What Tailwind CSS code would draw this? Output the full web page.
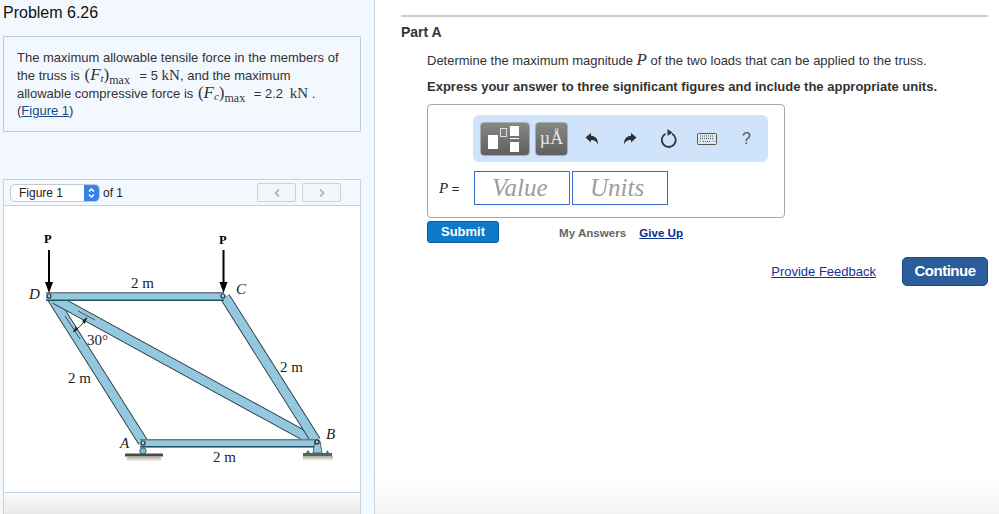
<!DOCTYPE html>
<html><head><meta charset="utf-8"><script src="https://cdn.jsdelivr.net/npm/@tailwindcss/browser@4"></script></head>
<body class="m-0 w-[999px] h-[514px] overflow-hidden bg-white font-['Liberation_Sans',Arial,sans-serif] text-[13px] text-[#222]">
<div class="flex h-[514px]">
  <aside class="w-[375px] h-[514px] shrink-0 bg-[#f3f8fe] border-r-[1px] border-[#c3d3e6] pl-[3px] overflow-hidden">
    <h1 class="text-[16px] leading-[19px] pt-[3px] h-[36px] font-normal text-[#111]">Problem 6.26</h1>
    <section class="w-[358px] h-[96px] border border-[#b9cfe0] pl-[13px] pt-[13px] text-[#333] leading-[17px]">
      <p class="h-[16px] leading-[16px]">The maximum allowable tensile force in the members of</p>
      <p class="h-[18px] leading-[18px] whitespace-nowrap">the truss is <span class="font-['Liberation_Serif',serif] text-[17px] ml-[1px]">(<i>F</i><i class="text-[11px] relative top-[2px]">t</i>)</span><span class="font-['Liberation_Serif',serif] text-[12px] relative top-[4px] mr-[6px]">max</span> = 5 <span class="font-['Liberation_Serif',serif] text-[15px]">kN</span>, and the maximum</p>
      <p class="h-[18px] leading-[18px] whitespace-nowrap">allowable compressive force is <span class="font-['Liberation_Serif',serif] text-[17px] ml-[1px]">(<i>F</i><i class="text-[11px] relative top-[2px]">c</i>)</span><span class="font-['Liberation_Serif',serif] text-[12px] relative top-[4px] mr-[5px]">max</span> = 2.2 <span class="font-['Liberation_Serif',serif] text-[15px] ml-[3px]">kN</span> .</p>
      <p class="h-[18px] leading-[18px]">(<a class="underline text-[#1a4a8a]">Figure 1</a>)</p>
    </section>
    <section class="w-[358px] h-[336px] mt-[47px] border border-[#c3d3e6] border-b-0 flex flex-col">
      <div class="h-[26px] shrink-0 border-b border-[#c3d3e6] flex items-center pl-[6px] text-[12px] text-[#222]">
        <div class="w-[90px] h-[18px] rounded-[5px] bg-white border border-[#c8c8c8] flex items-center justify-between pl-[8px] overflow-hidden">
          <span>Figure 1</span>
          <span class="w-[15px] h-[18px] bg-[#3b82e6] flex items-center justify-center rounded-r-[5px]">
            <svg width="9" height="12" viewBox="0 0 9 12"><path d="M2 4.500 4.500 2 7 4.500M2 7.500 4.500 10 7 7.500" fill="none" stroke="#fff" stroke-width="1.500"/></svg>
          </span>
        </div>
        <span class="ml-[3px]">of 1</span>
        <div class="ml-auto mr-[19px] flex gap-[6px]">
          <span class="w-[39px] h-[19px] border border-[#d0d0d0] rounded-[2px] bg-[#f4f6f8] flex items-center justify-center"><svg width="8" height="10" viewBox="0 0 8 10"><path d="M6 1.500 2.500 5 6 8.500" fill="none" stroke="#b5b5b5" stroke-width="1.800"/></svg></span>
          <span class="w-[39px] h-[19px] border border-[#d0d0d0] rounded-[2px] bg-[#f4f6f8] flex items-center justify-center"><svg width="8" height="10" viewBox="0 0 8 10"><path d="M2 1.500 5.500 5 2 8.500" fill="none" stroke="#b5b5b5" stroke-width="1.800"/></svg></span>
        </div>
      </div>
      <div class="h-[286px] shrink-0 bg-white">
        <svg width="356" height="286" viewBox="4 206 356 286" class="block" font-family="Liberation Serif, serif" fill="#222">
          <defs><linearGradient id="sh" x1="0" y1="0" x2="0" y2="1"><stop offset="0" stop-color="#a8a88e"/><stop offset="1" stop-color="#fff"/></linearGradient></defs>
          <!-- D-A -->
          <line x1="52" y1="298" x2="143" y2="442" stroke="#26343c" stroke-width="10.500"/>
          <line x1="52" y1="298" x2="143" y2="442" stroke="#94c8df" stroke-width="8.800"/>
          <!-- D-B -->
          <line x1="55" y1="299" x2="314" y2="441" stroke="#26343c" stroke-width="10.500"/>
          <line x1="55" y1="299" x2="314" y2="441" stroke="#94c8df" stroke-width="8.800"/>
          <!-- C-B -->
          <line x1="225" y1="297" x2="316" y2="441" stroke="#26343c" stroke-width="10.500"/>
          <line x1="225" y1="297" x2="316" y2="441" stroke="#94c8df" stroke-width="8.800"/>
          <!-- D-C -->
          <rect x="46" y="292" width="178" height="9" rx="2" fill="#94c8df"/>
          <rect x="46" y="292" width="178" height="1.500" fill="#6f7a80"/>
          <rect x="46" y="299.500" width="178" height="1.500" fill="#1f5468"/>
          <!-- A-B -->
          <rect x="140" y="439" width="177" height="8.500" rx="2" fill="#94c8df"/>
          <rect x="140" y="439" width="177" height="1.500" fill="#6f7a80"/>
          <rect x="140" y="446" width="177" height="1.500" fill="#1f5468"/>
          <!-- angle dims -->
          <g stroke="#333" stroke-width="0.800" fill="none">
            <line x1="78" y1="311" x2="95" y2="320"/>
            <line x1="65" y1="316" x2="80" y2="339"/>
            <path d="M73 332Q81 327 87 318" stroke-width="1"/>
          </g>
          <path d="M73 332 76 326 78 330ZM87 317 85 324 82 321Z" fill="#222"/>
          <!-- pins -->
          <g fill="#b8d2de" stroke="#333" stroke-width="1.200">
            <circle cx="49" cy="296" r="2"/>
            <circle cx="223" cy="296" r="2"/>
            <circle cx="143" cy="443" r="2"/>
          </g>
          <!-- Support A -->
          <circle cx="143" cy="451" r="3.200" fill="#79c2dd" stroke="#333" stroke-width="0.800"/>
          <rect x="125" y="453.500" width="38" height="3" fill="#4a4a4a"/>
          <rect x="127" y="456.500" width="34" height="5" fill="url(#sh)"/>
          <!-- Support B -->
          <path d="M313 453 315 441Q317 438 320 441L322 453Z" fill="#94c8df" stroke="#333" stroke-width="0.700"/>
          <circle cx="317" cy="442" r="2" fill="#b8d2de" stroke="#222" stroke-width="1.200"/>
          <path d="M303 456V453H306L308 450 310 453H320L326 453 327.500 450 329 453H332V456Z" fill="#55626a"/>
          <rect x="303" y="456" width="30" height="5" fill="url(#sh)"/>
          <!-- loads -->
          <g fill="#000">
            <rect x="48" y="250" width="2" height="34"/><path d="M45 282H53L49 293Z"/>
            <rect x="222.500" y="250" width="2" height="34"/><path d="M219.500 282H227.500L223.500 293Z"/>
          </g>
          <g font-size="12.500" font-weight="700" fill="#000"><text x="44" y="243">P</text><text x="219" y="244">P</text></g>
          <g font-size="15">
            <text x="131" y="288">2 m</text><text x="87" y="345">30°</text><text x="68" y="383">2 m</text>
            <text x="280" y="372">2 m</text><text x="213" y="462">2 m</text>
          </g>
          <g font-size="15" font-style="italic">
            <text x="29" y="299">D</text><text x="236" y="294">C</text><text x="120" y="448">A</text><text x="326" y="439">B</text>
          </g>
        </svg>
      </div>
      <div class="flex-1 border-t border-[#c3d3e6] bg-gradient-to-b from-[#fbfbfb] to-[#e9e9e9]"></div>
    </section>
  </aside>
  <main class="flex-1 h-[514px] pl-[26px] pr-[11px] pt-[15px] bg-gradient-to-b from-white from-[93%] to-[#f4f4f4]">
    <div class="h-[2px] bg-[#cccccc]"></div>
    <h2 class="mt-[7px] h-[16px] text-[14px] leading-[16px] font-bold text-[#333]">Part A</h2>
    <div class="pl-[26px]">
      <p class="mt-[11px] h-[18px] leading-[18px] text-[#333]">Determine the maximum magnitude <i class="font-['Liberation_Serif',serif] text-[17px]">P</i> of the two loads that can be applied to the truss.</p>
      <p class="mt-[9px] h-[18px] leading-[18px] font-bold text-[#333]">Express your answer to three significant figures and include the appropriate units.</p>
      <div class="mt-[8px] w-[358px] h-[114px] border border-[#a8a8a8] rounded-[4px] relative">
        <div class="ml-[45px] mt-[10px] w-[295px] h-[47px] rounded-[6px] bg-[#cfe3fb] flex items-center pl-[7px] text-[#444]">
          <span class="w-[50px] h-[34px] rounded-[4px] border border-[#aaa] bg-gradient-to-b from-[#888] to-[#5f5f5f] block relative">
            <svg width="48" height="32" viewBox="0 0 48 32" class="block"><rect x="7" y="12" width="10" height="14" fill="#fff"/><rect x="19.500" y="5.500" width="6" height="8" fill="none" stroke="#ddd"/><rect x="29" y="3" width="9" height="10" fill="#fff"/><rect x="29" y="15" width="9" height="1" fill="#fff"/><rect x="29" y="19" width="9" height="10" fill="#fff"/></svg>
          </span>
          <span class="ml-[5px] w-[33px] h-[34px] rounded-[4px] border border-[#aaa] bg-gradient-to-b from-[#888] to-[#5f5f5f] flex items-center justify-center text-[#e6e6e6] font-['Liberation_Serif',serif] text-[18px]">µÅ</span>
          <svg class="ml-[17px]" width="14" height="14" viewBox="0 0 14 14"><path d="M0.500 5.500 6 1V3.800C10.500 4 13 7 13 12.500 11.500 9.500 10 8 6 8V10.500Z" fill="#2e2e2e"/></svg>
          <svg class="ml-[24px]" width="14" height="14" viewBox="0 0 14 14"><path d="M13.500 5.500 8 1V3.800C3.500 4 1 7 1 12.500 2.500 9.500 4 8 8 8V10.500Z" fill="#2e2e2e"/></svg>
          <svg class="ml-[23px]" width="18" height="19" viewBox="0 0 18 19"><path d="M5.500 4.800A7 7 0 1 0 12 4.800" fill="none" stroke="#333" stroke-width="1.800"/><path d="M7.500 0.500V7.500L12.500 4Z" fill="#333" transform="translate(0 -0.500)"/></svg>
          <svg class="ml-[19px]" width="20" height="12" viewBox="0 0 20 12"><rect x="0.500" y="0.500" width="19" height="11" rx="1" fill="#dfe6ee" stroke="#555"/><path d="M3 3H17M3 5.500H17M3 8H4M6 8.500H14M16 8H17" stroke="#555" stroke-dasharray="1 1"/></svg>
          <span class="ml-[25px] text-[16px] text-[#555]">?</span>
        </div>
        <div class="flex items-center ml-[46px] mt-[9px] relative">
          <span class="absolute left-[-35px] top-[6px] text-[13px] whitespace-nowrap text-[#222]"><i class="font-['Liberation_Serif',serif] text-[15px]">P</i> =</span>
          <span class="w-[96px] h-[34px] border border-[#3a6bc9] flex items-center pl-[17px] font-['Liberation_Serif',serif] italic text-[25px] text-[#9d9d9d]">Value</span>
          <span class="ml-[2px] w-[96px] h-[34px] border border-[#3a6bc9] flex items-center pl-[17px] font-['Liberation_Serif',serif] italic text-[25px] text-[#9d9d9d]">Units</span>
        </div>
      </div>
      <div class="mt-[3px] flex items-center h-[22px] text-[11.6px] font-bold">
        <button class="w-[72px] h-[22px] rounded-[3px] bg-[#0d79c9] border border-[#0b5f9e] text-white text-[13px] font-bold">Submit</button>
        <span class="ml-[60px] text-[#666] mt-[1px]">My Answers</span>
        <a class="ml-[13px] underline text-[#0b2f8c] mt-[1px]">Give Up</a>
      </div>
    </div>
    <div class="mt-[14px] flex items-center justify-end h-[29px]">
      <a class="underline text-[#1a2f94] text-[13px] mr-[26px] mt-[1px]">Provide Feedback</a>
      <button class="w-[86px] h-[29px] rounded-[5px] bg-[#2b5d9b] border border-[#1f4a80] text-white text-[15px] tracking-[-0.5px] font-bold">Continue</button>
    </div>
  </main>
</div>
</body></html>
